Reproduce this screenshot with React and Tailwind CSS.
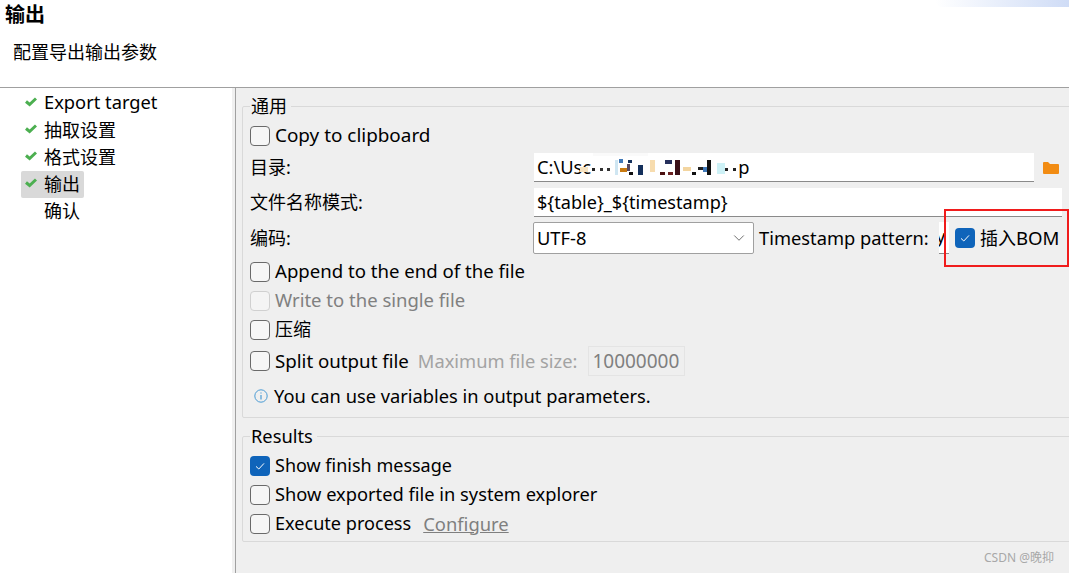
import { ChevronDown } from "lucide-react";

const FONT = { fontFamily: '"Noto Sans", "Noto Sans CJK SC", sans-serif' };

// mosaic over the blurred path: x, y, w, h, colour
const MOSAIC = [
  [12, -6, 55, 3, "#fafafa"],
  [-1, 8, 8, 5, "#f6e2c0"], [11, 9, 3, 3, "#222"], [19, 9, 3, 3, "#333"], [26, 9, 3, 3, "#333"],
  [34, 1, 3, 15, "#cfe6f2"], [39, 9, 7, 4, "#c87a10"], [38, 0, 4, 4, "#3f78b8"],
  [47, 1, 4, 3, "#14305c"], [46, 5, 3, 7, "#5a4a60"], [48, 13, 4, 3, "#111"],
  [57, 6, 5, 10, "#14305c"], [69, 1, 5, 12, "#f7dcae"], [79, 13, 5, 3, "#4a1010"],
  [84, 1, 7, 4, "#26305c"], [87, 13, 5, 3, "#6a2020"], [94, 1, 5, 15, "#3a1018"],
  [102, 8, 8, 4, "#f3d5a0"], [111, 13, 4, 3, "#111"], [117, 8, 5, 3, "#222"],
  [122, 8, 4, 5, "#3f78b8"], [126, 1, 4, 15, "#111"], [136, 4, 8, 11, "#cdf1f6"],
  [144, 9, 3, 3, "#222"], [152, 9, 3, 3, "#222"],
];

function Check() {
  return (
    <svg viewBox="0 0 12 10" className="h-[10px] w-3 text-[#4caf50]" fill="none" stroke="currentColor" strokeWidth="3">
      <path d="M1 4.5l3.6 3L11 1.5" />
    </svg>
  );
}

function Box({ checked, disabled }) {
  if (checked) {
    return (
      <span className="flex h-5 w-5 shrink-0 items-center justify-center rounded-[4px] bg-[#0f64ba]">
        <svg viewBox="0 0 12 12" className="h-3 w-3" fill="none" stroke="#fff" strokeWidth="1">
          <path d="M2 6.4l2.8 2.6L10 3.4" />
        </svg>
      </span>
    );
  }
  return (
    <span
      className={`h-5 w-5 shrink-0 rounded-[4px] border ${
        disabled ? "border-[#d0d0d0] bg-[#f4f4f4]" : "border-[#6a6a6a] bg-[#f6f6f6]"
      }`}
    />
  );
}

function CheckRow({ label, checked, disabled, lift = true, className = "", children }) {
  return (
    <div className={`flex h-[29px] items-center ${className}`}>
      <Box checked={checked} disabled={disabled} />
      <span className={`ml-[5px] whitespace-nowrap ${lift ? "pb-[2px]" : ""} ${disabled ? "text-[#808080]" : "text-black"}`}>{label}</span>
      {children}
    </div>
  );
}

function TreeItem({ label, done, selected, latin }) {
  return (
    <div className="flex h-[27px] items-center pl-[21px]">
      <div className={`flex h-[27px] items-center rounded-[2px] pl-1 pr-1 ${selected ? "bg-[#d9d9d9]" : ""}`}>
        <span className="-mt-1 flex w-[19px]">{done && <Check />}</span>
        <span className={`whitespace-nowrap ${latin ? "pb-1 text-[18.3px]" : "text-[18px]"}`}>{label}</span>
      </div>
    </div>
  );
}

function Group({ title, cjk, className = "", children }) {
  return (
    <fieldset className={`-mr-1 min-w-0 rounded-[2px] border border-[#d9d9d9] pl-[7px] ${className}`}>
      <legend className={`h-[22px] pl-px pr-1 leading-[22px] text-black ${cjk ? "text-[18px]" : ""}`}>{title}</legend>
      {children}
    </fieldset>
  );
}

export default function App() {
  return (
    <div style={FONT} className="relative flex h-[573px] w-[1069px] flex-col overflow-hidden bg-white text-[18.3px] text-black">
      <div className="absolute right-0 top-0 h-[7px] w-[134px] rounded-bl-[60px] bg-gradient-to-r from-white to-[#cfdcf6]" />

      <header className="h-[88px] shrink-0 border-b border-[#a0a0a0] bg-white">
        <h1 className="pl-[5px] pt-[2px] text-[20px] font-bold leading-[26px]">输出</h1>
        <p className="pl-[13px] pt-[11px] text-[18px] leading-[26px]">配置导出输出参数</p>
      </header>

      <div className="flex min-h-0 flex-1">
        <nav className="w-[232px] shrink-0 bg-white pt-[2px]">
          <TreeItem label="Export target" done latin />
          <TreeItem label="抽取设置" done />
          <TreeItem label="格式设置" done />
          <TreeItem label="输出" done selected />
          <TreeItem label="确认" />
        </nav>
        <div className="w-[3px] shrink-0 bg-[#f0f0f0]" />

        <main className="min-w-0 flex-1 border-l border-[#a0a0a0] bg-[#efefef] pl-[6px] pt-[7px]">
          <Group title="通用" cjk className="pb-[6px]">
            <CheckRow label="Copy to clipboard" lift={false} className="mt-1 text-[18.9px]" />

            <div className="mt-[3px] flex h-[29px] items-center">
              <label className="w-[284px] shrink-0 text-[18px]">目录:</label>
              <div className="flex h-full w-[500px] items-center border-b border-[#8a8a8a] bg-white pl-[3px]">
                <span>C:\Usc</span>
                <svg viewBox="10 0 147 16" className="h-4 w-[147px] shrink-0 overflow-visible">
                  {MOSAIC.map(([x, y, w, h, c], i) => (
                    <rect key={i} x={x} y={y} width={w} height={h} fill={c} />
                  ))}
                </svg>
                <span>p</span>
              </div>
              <svg viewBox="0 0 16 12" className="ml-[9px] h-3 w-4" fill="#f28c13">
                <path d="M0 1a1 1 0 0 1 1-1h4l2 2h8a1 1 0 0 1 1 1v8a1 1 0 0 1-1 1H1a1 1 0 0 1-1-1z" />
              </svg>
            </div>

            <div className="mt-[6px] flex h-[29px] items-center">
              <label className="w-[284px] shrink-0 text-[18px]">文件名称模式:</label>
              <div className="flex h-full w-[528px] items-center border-b border-[#8a8a8a] bg-white pl-[3px] pt-[2px] text-[18.1px]">
                {"${table}_${timestamp}"}
              </div>
            </div>

            <div className="mt-[5px] flex h-[32px] items-center">
              <label className="w-[283px] shrink-0 text-[18px]">编码:</label>
              <div className="flex h-full w-[221px] shrink-0 items-center justify-between rounded-[2px] border border-[#a0a0a0] bg-white pl-[3px] pr-[5px]">
                <span>UTF-8</span>
                <ChevronDown className="h-[18px] w-[18px] text-[#606060]" strokeWidth={1.2} />
              </div>
              <label className="ml-[5px] w-[180px] shrink-0 whitespace-nowrap">Timestamp pattern:</label>
              <div className="mr-[6px] h-full w-[10px] shrink-0 overflow-hidden border-b border-[#8a8a8a] bg-white">
                <span className="-ml-[3px]">y</span>
              </div>
              <Box checked />
              <span className="ml-[5px] whitespace-nowrap text-[18.6px]">
                <span className="text-[18px]">插入</span>BOM
              </span>
            </div>

            <CheckRow label="Append to the end of the file" className="mt-[3px] text-[18.6px]" />
            <CheckRow label="Write to the single file" disabled className="text-[18.5px]" />
            <CheckRow label={<span className="text-[18px]">压缩</span>} />
            <CheckRow label={<span className="text-[18.7px]">Split output file</span>} lift={false} className="mt-[2px] !h-[30px]">
              <span className="ml-[9px] whitespace-nowrap text-[#a3a3a3]">Maximum file size:</span>
              <span className="ml-[11px] flex h-[30px] w-[97px] items-center border border-[#e4e4e4] pl-[3px] text-[19px] text-[#7f7f7f]">10000000</span>
            </CheckRow>

            <div className="mt-[5px] flex h-[30px] items-center pl-[4px]">
              <svg viewBox="0 0 14 14" className="h-[14px] w-[14px] shrink-0" fill="none" stroke="#4a9bd4">
                <circle cx="7" cy="7" r="6.2" />
                <path d="M7 6v4.5M7 3.4v1.2" strokeWidth="1.2" />
              </svg>
              <span className="ml-[6px] whitespace-nowrap">You can use variables in output parameters.</span>
            </div>
          </Group>

          <Group title="Results" className="mt-[7px] pb-[3px]">
            <CheckRow label="Show finish message" lift={false} checked className="mt-1 text-[18px]" />
            <CheckRow label="Show exported file in system explorer" />
            <CheckRow label="Execute process" lift={false} className="text-[18.1px]">
              <a className="ml-3 text-[18.4px] text-[#7f7f7f] underline">Configure</a>
            </CheckRow>
          </Group>
        </main>
      </div>

      <div className="pointer-events-none absolute left-[944px] top-[209px] h-[58px] w-[125px] border-2 border-[#f01c1c]" />
      <span className="absolute right-[15px] top-[550px] text-[12px] leading-4 text-[#a8a8a8]">CSDN @晚抑</span>
    </div>
  );
}
